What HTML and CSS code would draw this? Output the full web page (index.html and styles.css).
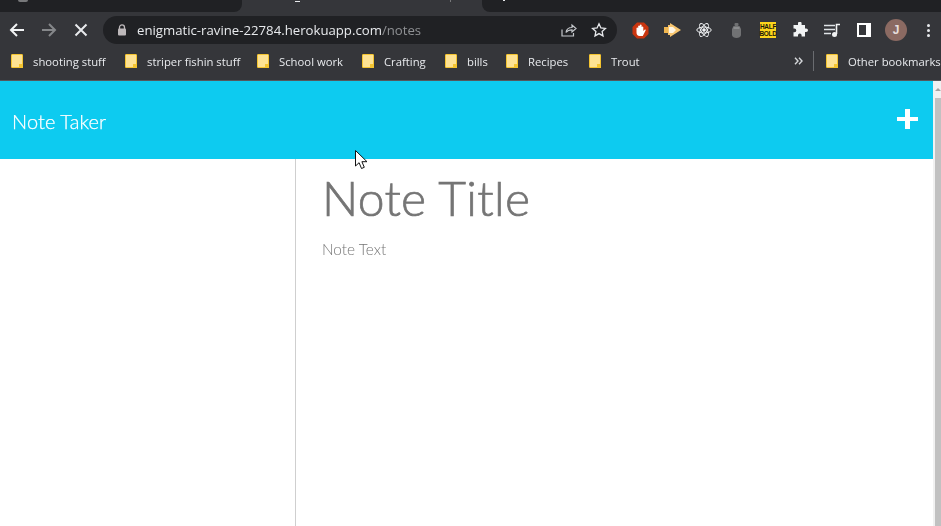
FILE: index.html
```html
<!DOCTYPE html>
<html lang="en">
<head>
<meta charset="utf-8">
<title>Note Taker</title>
<link rel="stylesheet" href="styles.css">
</head>
<body>
<div class="browser">
  <div class="tabstrip">
    <div class="tab tab-left"><span class="tab-bit bit-spinner"></span></div>
    <div class="tab-active"><span class="tab-bit bit-title"></span><span class="tab-bit bit-close"></span></div>
    <div class="tab tab-right"><span class="tab-bit bit-next"></span></div>
  </div>
  <div class="toolbar">
    <div class="slot"><svg width="16" height="16" viewBox="0 0 16 16" class="ico"><path d="M15 8H2M8 2L2 8l6 6" fill="none" stroke="#f1f3f4" stroke-width="2"/></svg></div>
    <div class="slot"><svg width="16" height="16" viewBox="0 0 16 16" class="ico"><path d="M1 8h13M8 2l6 6-6 6" fill="none" stroke="#85878a" stroke-width="2"/></svg></div>
    <div class="slot"><svg width="14" height="14" viewBox="0 0 14 14" class="ico"><path d="M1.500 1.500l11 11M12.500 1.500l-11 11" fill="none" stroke="#e8eaed" stroke-width="2"/></svg></div>
    <div class="omnibox">
      <svg width="10" height="12" viewBox="0 0 10 12" class="lock"><path d="M2.500 5V3.400a2.500 2.500 0 0 1 5 0V5" fill="none" stroke="#bdb8ba" stroke-width="1.300"/><rect x="1" y="4.500" width="8" height="7" rx="1" fill="#bdb8ba"/></svg>
      <div class="url"><span class="url-host">enigmatic-ravine-22784.herokuapp.com</span><span class="url-path">/notes</span></div>
      <svg width="16" height="14" viewBox="0 0 16 14" class="share"><path d="M1 6.500V13h11.500V10M5 9.500C5.500 6 8 4.500 11 4.500V2l4 3.500-4 3.500V6.800C8.500 6.800 6.500 7.500 5 9.500Z" fill="none" stroke="#c4c7cb" stroke-width="1.200"/></svg>
      <svg width="16" height="16" viewBox="0 0 16 16" class="star"><path d="M8 1.800l1.900 4.100 4.500.5-3.300 3 .9 4.500L8 11.600l-4 2.300.9-4.500-3.300-3 4.500-.5Z" fill="none" stroke="#e8eaed" stroke-width="1.300"/></svg>
    </div>
    <div class="actions">
      <div class="slot"><svg width="17" height="17" viewBox="0 0 17 17"><path d="M5 .5h7L16.500 5v7L12 16.500H5L.5 12V5Z" fill="#c9350f"/><path d="M4.500 8.500V6a.9.900 0 0 1 1.700 0V4a.9.900 0 0 1 1.700 0V3a.9.900 0 0 1 1.700 0v2a.9.900 0 0 1 1.700 0v4l1.300-1.300c.7-.6 1.500.2 1 .9L10.800 14H7.500C5.700 14 4.500 12.500 4.500 10.500Z" fill="#fff"/></svg></div>
      <div class="slot"><svg width="17" height="14" viewBox="0 0 17 14"><path d="M0 4h4v6H0Z" fill="#f0b64f"/><path d="M4 2h2V0l11 7-11 7v-2H4Z" fill="#f7c56f"/><path d="M5 4h4l3 3-3 3H5Z" fill="#fff6e3"/></svg></div>
      <div class="slot"><svg width="16" height="16" viewBox="0 0 16 16" fill="none" stroke="#eef0f2" stroke-width="1"><ellipse cx="8" cy="8" rx="7.200" ry="3"/><ellipse cx="8" cy="8" rx="7.200" ry="3" transform="rotate(60 8 8)"/><ellipse cx="8" cy="8" rx="7.200" ry="3" transform="rotate(120 8 8)"/><circle cx="8" cy="8" r="1.300" fill="#eef0f2"/></svg></div>
      <div class="slot"><svg width="9" height="15" viewBox="0 0 9 15"><rect x="2.500" y="0" width="4" height="3" rx="1" fill="#6f7072"/><path d="M1.500 3h6L9 6v6c0 2-2.500 3-4.500 3S0 14 0 12V6Z" fill="#717274"/><path d="M1.500 5h6" stroke="#a5a6a8"/></svg></div>
      <div class="slot"><div class="halfbold"><span class="hb-line">HALF</span><span class="hb-line">BOLD</span></div></div>
      <div class="slot"><svg width="16" height="16" viewBox="0 0 16 16"><path d="M6 1.500a1.800 1.800 0 0 1 3.600 0V3H13v3.400h1.200a1.800 1.800 0 0 1 0 3.600H13v4.500H9.600v-1.200a1.800 1.800 0 0 0-3.600 0v1.200H1.500v-4.300h1a1.800 1.800 0 0 0 0-3.600h-1V3H6Z" fill="#f1f3f4"/></svg></div>
      <div class="slot"><svg width="17" height="15" viewBox="0 0 17 15"><path d="M0 2.500h11M0 6.500h11M0 10.500h7" stroke="#dfe3e6" stroke-width="1.500"/><path d="M12.500 11V1.500H16" fill="none" stroke="#f1f3f4" stroke-width="1.600"/><circle cx="10.500" cy="11.500" r="2.500" fill="#f1f3f4"/></svg></div>
      <div class="slot"><div class="sidepanel"></div></div>
      <div class="slot"><div class="avatar">J</div></div>
      <div class="slot"><div class="dots"><i></i><i></i><i></i></div></div>
    </div>
  </div>
  <div class="bookmarks">
    <div class="bm"><span class="folder"></span><span class="bm-label">shooting stuff</span></div>
    <div class="bm"><span class="folder"></span><span class="bm-label">striper fishin stuff</span></div>
    <div class="bm"><span class="folder"></span><span class="bm-label">School work</span></div>
    <div class="bm"><span class="folder"></span><span class="bm-label">Crafting</span></div>
    <div class="bm"><span class="folder"></span><span class="bm-label">bills</span></div>
    <div class="bm"><span class="folder"></span><span class="bm-label">Recipes</span></div>
    <div class="bm"><span class="folder"></span><span class="bm-label">Trout</span></div>
    <div class="bm-end">
      <svg width="9" height="8" viewBox="0 0 9 8" class="chev"><path d="M1 .8L4 4 1 7.200M5 .8L8 4 5 7.200" fill="none" stroke="#d5d7da" stroke-width="1.400"/></svg>
      <span class="bm-sep"></span>
      <div class="bm bm-other"><span class="folder"></span><span class="bm-label">Other bookmarks</span></div>
    </div>
  </div>
</div>
<div class="viewport">
  <div class="page">
    <header class="nav">
      <div class="brand">Note Taker</div>
      <svg width="21" height="20" viewBox="0 0 21 20" class="plus"><path d="M8 0h5v8h8v4h-8v8H8v-8H0V8h8Z" fill="#fff"/></svg>
    </header>
    <div class="content">
      <aside class="sidebar"></aside>
      <main class="editor">
        <div class="note-title">Note Title</div>
        <div class="note-text">Note Text</div>
      </main>
    </div>
  </div>
  <div class="scrollbar">
    <div class="scroll-up"></div>
    <div class="scroll-thumb"></div>
  </div>
  <svg width="14" height="20" viewBox="0 0 14 20" class="cursor"><path d="M.5.500V16l3.600-3.300 2.400 5.800 2.800-1.200-2.400-5.600H12Z" fill="#fff" stroke="#111" stroke-width="1"/></svg>
</div>
</body>
</html>
```

FILE: styles.css
```css
* { box-sizing: border-box; }
html, body { margin: 0; height: 100%; overflow: hidden; }
body { display: flex; flex-direction: column; background: #fff; font-family: "Lato", sans-serif; }

.browser { flex: none; background: #35363a; border-bottom: 1px solid #55585c; height: 81px; overflow: hidden; }

.tabstrip { display: flex; height: 12px; }
.tab { background: #202124; height: 12px; position: relative; }
.tab-left { width: 242px; border-bottom-right-radius: 8px; }
.tab-right { flex: 1; border-bottom-left-radius: 8px; }
.tab-active { width: 240px; position: relative; }
.tab-bit { position: absolute; top: 0; display: block; }
.bit-spinner { left: 18px; width: 10px; height: 2px; background: #77787a; border-radius: 0 0 6px 6px; }
.bit-title { left: 53px; width: 5px; height: 1px; top: 1px; background: #e8eaed; }
.bit-close { left: 208px; width: 1px; height: 2px; background: #77787a; }
.bit-next { left: 21px; width: 2px; height: 1px; background: #e8eaed; }

.toolbar { display: flex; align-items: center; height: 32px; padding: 4px 0 0 1px; }
.slot { flex: none; width: 32px; height: 28px; display: flex; align-items: center; justify-content: center; }
.omnibox { flex: none; width: 514px; height: 28px; margin-left: 6px; padding: 0 10px 0 14px; border-radius: 14px; background: #202124; display: flex; align-items: center; }
.lock { flex: none; margin-right: 10px; }
.url { flex: 1; font: 13.200px "Open Sans", sans-serif; white-space: nowrap; will-change: transform; }
.url-host { color: #e8eaed; }
.url-path { color: #8f9194; }
.share { flex: none; margin-right: 14px; }
.star { flex: none; }
.actions { display: flex; margin-left: 7px; flex: none; width: 320px; }

.halfbold { width: 16px; height: 16px; background: #fdd51c; display: flex; flex-direction: column; justify-content: center; align-items: center; font: 700 6.500px/7.500px "Liberation Sans", sans-serif; letter-spacing: -.3px; color: #1c1a08; text-align: center; }
.hb-line { display: block; }
.sidepanel { width: 14px; height: 14px; border: 2px solid #fff; border-right-width: 5px; background: #35363a; }
.avatar { width: 22px; height: 22px; border-radius: 50%; background: #8b6a62; color: #e6dedc; font: 600 12px/22px "Liberation Sans", sans-serif; text-align: center; }
.dots { display: flex; flex-direction: column; gap: 2px; }
.dots i { display: block; width: 3px; height: 3px; border-radius: 50%; background: #e8eaed; }

.bookmarks { display: flex; align-items: center; height: 34px; padding: 0 0 0 11px; white-space: nowrap; }
.bm { display: flex; align-items: center; gap: 10px; flex: none; }
.bm:nth-child(1) { width: 114px; }
.bm:nth-child(2) { width: 132px; }
.bm:nth-child(3) { width: 105px; }
.bm:nth-child(4) { width: 83px; }
.bm:nth-child(5) { width: 61px; }
.bm:nth-child(6) { width: 83px; }
.bm:nth-child(7) { width: 60px; }
.bm.bm-other { width: auto; }
.folder { flex: none; width: 12px; height: 14px; background: #fde293; border: 1px solid #f4c430; border-radius: 1px; position: relative; }
.folder::after { content: ""; position: absolute; right: -1px; bottom: -1px; width: 4px; height: 4px; background: #f4c430; }
.bm-label { font: 11.300px "Open Sans", sans-serif; color: #e8eaed; will-change: transform; }
.bm-end { margin-left: auto; display: flex; align-items: center; width: 147px; flex: none; }
.chev { flex: none; }
.bm-sep { flex: none; width: 1px; height: 20px; background: #6a6c70; margin: 0 12px 0 10px; }

.viewport { flex: 1; display: flex; min-height: 0; position: relative; }
.page { flex: 1; display: flex; flex-direction: column; min-width: 0; }
.nav { flex: none; height: 78px; background: #0dcbf0; display: flex; align-items: center; justify-content: space-between; padding: 0 15px 0 12px; }
.brand { font-size: 20px; font-weight: 300; letter-spacing: .1px; -webkit-text-stroke: .25px #fff; color: #fff; padding-top: 2px; will-change: transform; }
.plus { flex: none; margin-bottom: 2px; }
.content { flex: 1; display: flex; min-height: 0; }
.sidebar { flex: none; width: 296px; border-right: 1px solid #cfcfcf; }
.editor { flex: 1; padding: 10px 0 0 26px; }
.note-title { font-size: 48px; font-weight: 300; line-height: 58px; color: #757575; -webkit-text-stroke: .7px #757575; letter-spacing: .3px; will-change: transform; }
.note-text { font-size: 15.400px; font-weight: 300; line-height: 20px; color: #757575; margin-top: 12px; will-change: transform; }

.scrollbar { flex: none; width: 8px; background: #f1f1f1; display: flex; flex-direction: column; align-items: flex-end; }
.scroll-up { flex: none; width: 0; height: 0; margin: 7px 0 0; border-left: 3px solid transparent; border-right: 3px solid transparent; border-bottom: 3px solid #a3a3a3; }
.scroll-thumb { flex: 1; width: 6px; margin-top: 7px; background: #c1c1c1; }

.cursor { position: absolute; left: 355px; top: 69px; }
```
